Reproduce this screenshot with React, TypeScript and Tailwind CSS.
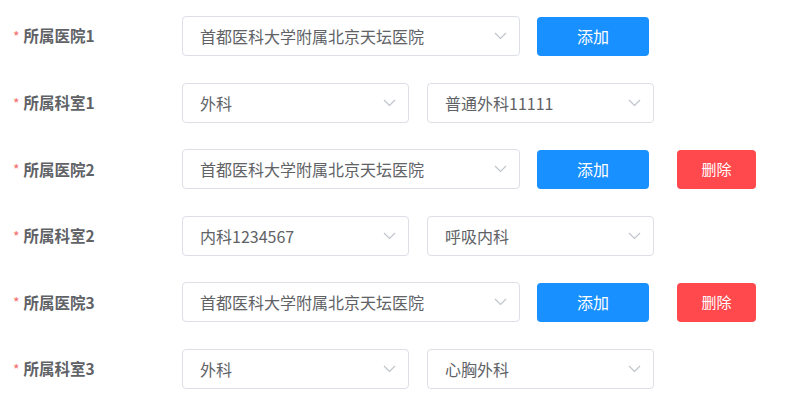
import React from 'react';

const font = { fontFamily: '"Microsoft YaHei", "Noto Sans CJK SC", "Liberation Sans", sans-serif' };

function Chevron() {
  return (
    <svg width="13" height="8" viewBox="0 0 13 8" className="shrink-0">
      <path d="M1 1 L6.5 6.5 L12 1" fill="none" stroke="#c0c4cc" strokeWidth="1.2" />
    </svg>
  );
}

function Select({ value, wide }: { value: string; wide?: boolean }) {
  return (
    <div
      className={`${wide ? 'w-[338px]' : 'w-[227px]'} h-10 border border-[#dcdfe6] rounded-[4px] bg-white flex items-center justify-between pl-[17px] pr-[12px]`}
    >
      <span className="text-[16px] text-[#606266]">{value}</span>
      <Chevron />
    </div>
  );
}

type Row =
  | { label: string; kind: 'hospital'; value: string; del: boolean }
  | { label: string; kind: 'dept'; a: string; b: string };

const rows: Row[] = [
  { label: '所属医院1', kind: 'hospital', value: '首都医科大学附属北京天坛医院', del: false },
  { label: '所属科室1', kind: 'dept', a: '外科', b: '普通外科11111' },
  { label: '所属医院2', kind: 'hospital', value: '首都医科大学附属北京天坛医院', del: true },
  { label: '所属科室2', kind: 'dept', a: '内科1234567', b: '呼吸内科' },
  { label: '所属医院3', kind: 'hospital', value: '首都医科大学附属北京天坛医院', del: true },
  { label: '所属科室3', kind: 'dept', a: '外科', b: '心胸外科' },
];

export default function App() {
  return (
    <div className="w-[795px] h-[404px] bg-white overflow-hidden" style={font}>
      <div className="flex flex-col gap-[26.6px] pt-4">
        {rows.map((row, i) => (
          <div key={i} className="flex items-center h-10">
            <div className="w-[182px] pl-[13px] flex items-center shrink-0">
              <span className="text-[#f56c6c] text-[14px] mr-[4px] leading-none">*</span>
              <span className="text-[15.5px] font-bold text-[#606266]">{row.label}</span>
            </div>
            {row.kind === 'hospital' ? (
              <div className="flex items-center">
                <Select value={row.value} wide />
                <button className="ml-[17px] w-[112px] h-[39px] rounded-[4px] bg-[#1890ff] text-white text-[16px]">
                  添加
                </button>
                {row.del && (
                  <button className="ml-[28px] w-[79px] h-[39px] rounded-[4px] bg-[#ff494d] text-white text-[15px]">
                    删除
                  </button>
                )}
              </div>
            ) : (
              <div className="flex items-center gap-[18px]">
                <Select value={row.a} />
                <Select value={row.b} />
              </div>
            )}
          </div>
        ))}
      </div>
    </div>
  );
}
